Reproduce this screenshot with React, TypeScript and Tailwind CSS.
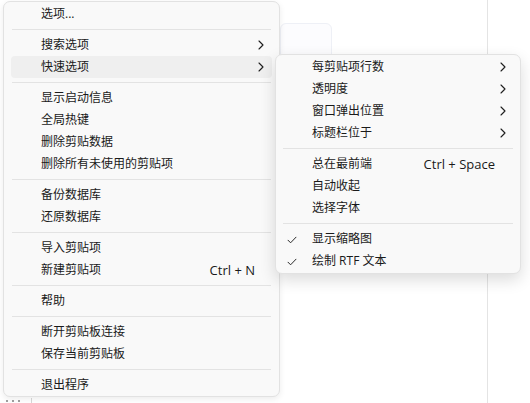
import React from "react"

type Item =
  | { sep: true }
  | { label: string; shortcut?: string; sub?: boolean; checked?: boolean; active?: boolean }

const mainItems: Item[] = [
  { label: "选项..." },
  { sep: true },
  { label: "搜索选项", sub: true },
  { label: "快速选项", sub: true, active: true },
  { sep: true },
  { label: "显示启动信息" },
  { label: "全局热键" },
  { label: "删除剪贴数据" },
  { label: "删除所有未使用的剪贴项" },
  { sep: true },
  { label: "备份数据库" },
  { label: "还原数据库" },
  { sep: true },
  { label: "导入剪贴项" },
  { label: "新建剪贴项", shortcut: "Ctrl + N" },
  { sep: true },
  { label: "帮助" },
  { sep: true },
  { label: "断开剪贴板连接" },
  { label: "保存当前剪贴板" },
  { sep: true },
  { label: "退出程序" },
]

const subItems: Item[] = [
  { label: "每剪贴项行数", sub: true },
  { label: "透明度", sub: true },
  { label: "窗口弹出位置", sub: true },
  { label: "标题栏位于", sub: true },
  { sep: true },
  { label: "总在最前端", shortcut: "Ctrl + Space" },
  { label: "自动收起" },
  { label: "选择字体" },
  { sep: true },
  { label: "显示缩略图", checked: true },
  { label: "绘制 RTF 文本", checked: true },
]

function Chevron() {
  return (
    <svg width="6" height="10" viewBox="0 0 6 10" fill="none">
      <path d="M1 1l4 4-4 4" stroke="#1f1f1f" strokeWidth="1.1" strokeLinecap="round" strokeLinejoin="round" />
    </svg>
  )
}

function Check() {
  return (
    <svg width="10" height="8" viewBox="0 0 10 8" fill="none">
      <path d="M1 4.2l2.6 2.6L9 1.2" stroke="#2a2a2a" strokeWidth="1" strokeLinecap="round" strokeLinejoin="round" />
    </svg>
  )
}

function MenuList({ items, textLeft, chevronRight, shortcutRight, sepInset }: {
  items: Item[]
  textLeft: string
  chevronRight: string
  shortcutRight: string
  sepInset: string
}) {
  return (
    <div className="flex flex-col">
      {items.map((it, i) =>
        "sep" in it ? (
          <div key={i} className={`h-[9px] flex items-center ${sepInset}`}>
            <div className="h-px w-full bg-[#e3e3e3]" />
          </div>
        ) : (
          <div
            key={i}
            className={`relative h-[22px] mx-[7px] rounded-[4px] flex items-center ${it.active ? "bg-[#efefef]" : ""}`}
          >
            {it.checked && (
              <span className="absolute left-[4px] top-[8px] flex">
                <Check />
              </span>
            )}
            <span className={`${textLeft} text-[12px] leading-none text-[#1a1a1a]`}>{it.label}</span>
            {it.shortcut && (
              <span className={`absolute ${shortcutRight} text-[13px] leading-none text-[#1a1a1a]`}>{it.shortcut}</span>
            )}
            {it.sub && (
              <span className={`absolute ${chevronRight} top-[6px] flex`}>
                <Chevron />
              </span>
            )}
          </div>
        )
      )}
    </div>
  )
}

export default function App() {
  return (
    <div
      className="relative w-[530px] h-[403px] overflow-hidden bg-white"
      style={{ fontFamily: '"Open Sans", "Noto Sans CJK SC", sans-serif' }}
    >
      {/* background window */}
      <div className="flex h-full">
        <div className="w-[488px] h-full border-r border-[#e4e4e4]" />
        <div className="flex-1" />
      </div>
      <div className="absolute left-[280px] top-[23px] w-[52px] h-[40px] rounded-[6px] border border-[#eef0f6] bg-[#fcfcfe]" />
      <div className="absolute left-[6px] top-[398px] w-[26px] h-[5px] border-r border-[#d8d8d8] flex gap-[4px] pt-[2px]">
        <div className="w-[2px] h-[2px] bg-[#a0a0a0]" />
        <div className="w-[2px] h-[2px] bg-[#a0a0a0]" />
        <div className="w-[2px] h-[2px] bg-[#a0a0a0]" />
      </div>

      {/* main menu */}
      <div className="absolute left-[3px] top-[1px] w-[277px] h-[396px] rounded-[7px] border border-[#e2e2e2] bg-[#f9f9f9] py-[1px] shadow-[0_2px_6px_rgba(0,0,0,0.08)]">
        <MenuList
          items={mainItems}
          textLeft="pl-[30px]"
          chevronRight="right-[8px]"
          shortcutRight="right-[17px]"
          sepInset="px-[8px]"
        />
      </div>

      {/* submenu */}
      <div className="absolute left-[275px] top-[54px] w-[246px] h-[220px] rounded-[7px] border border-[#e2e2e2] bg-[#f9f9f9] py-[1px] shadow-[0_6px_16px_rgba(0,0,0,0.14)]">
        <MenuList
          items={subItems}
          textLeft="pl-[29px]"
          chevronRight="right-[7px]"
          shortcutRight="right-[18px]"
          sepInset="px-[7px]"
        />
      </div>
    </div>
  )
}
